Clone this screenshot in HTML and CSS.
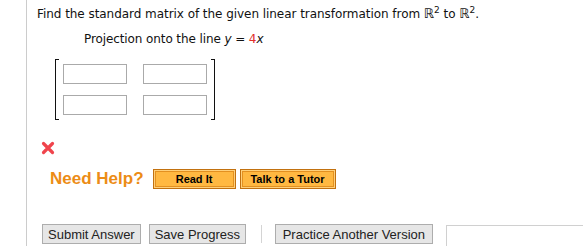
FILE: index.html
```html
<!DOCTYPE html>
<html>
<head>
<meta charset="utf-8">
<link rel="stylesheet" href="styles.css">
</head>
<body>
<div class="page">
  <div class="question">
    <p class="prompt">Find the standard matrix of the given linear transformation from <span class="bb">ℝ</span><sup>2</sup> to <span class="bb">ℝ</span><sup>2</sup>.</p>
    <p class="sub">Projection onto the line <i class="var">y</i> = <span class="rnd">4</span><i class="var">x</i></p>
    <div class="matrix">
      <div class="cells">
        <input class="cell" type="text">
        <input class="cell" type="text">
        <input class="cell" type="text">
        <input class="cell" type="text">
      </div>
    </div>
    <div class="mark">
      <svg width="14" height="14" viewBox="0 0 14 14"><path d="M2.5 2.5 L11.5 11.5 M11.5 2.5 L2.5 11.5" stroke="#f0444c" stroke-width="3.2" stroke-linecap="round"/></svg>
    </div>
    <div class="help">
      <span class="need">Need Help?</span>
      <button class="hbtn read">Read It</button>
      <button class="hbtn tutor">Talk to a Tutor</button>
    </div>
    <div class="actions">
      <button class="abtn">Submit Answer</button>
      <button class="abtn">Save Progress</button>
      <span class="sep"></span>
      <button class="abtn wide">Practice Another Version</button>
      <div class="box"></div>
    </div>
  </div>
</div>
</body>
</html>
```
FILE: styles.css
```css
html, body { margin: 0; padding: 0; background: #fff; }
.page {
  margin-left: 26px;
  border-left: 1px solid #cccccc;
  height: 246px;
  overflow: hidden;
}
.question {
  padding-left: 10px;
  font-family: "DejaVu Sans", Verdana, sans-serif;
  color: #111;
}
.prompt {
  margin: 0;
  padding-top: 4px;
  font-size: 12px;
  letter-spacing: -0.05px;
  line-height: 20px;
  white-space: nowrap;
}
.bb { font-size: 13px; }
sup { font-size: 9px; line-height: 0; vertical-align: 5px; }
.sub {
  margin: 0;
  padding-top: 5px;
  padding-left: 47px;
  font-size: 12px;
  letter-spacing: -0.1px;
  line-height: 20px;
}
.var { font-style: italic; }
.rnd { color: #e0302c; }
.matrix {
  margin-top: 10px;
  margin-left: 18px;
  width: 160px;
  height: 61px;
  position: relative;
  display: flex;
  align-items: center;
  justify-content: center;
}
.matrix::before, .matrix::after {
  content: "";
  position: absolute;
  top: 0;
  bottom: 0;
  width: 3px;
  border: 1.5px solid #111;
}
.matrix::before { left: 0; border-right: none; }
.matrix::after { right: 0; border-left: none; }
.cells {
  display: grid;
  grid-template-columns: 64px 64px;
  column-gap: 16px;
  row-gap: 11px;
}
.cell {
  box-sizing: border-box;
  width: 64px;
  height: 20px;
  margin: 0;
  padding: 0;
  border: 1px solid #aaaaaa;
  background: #fff;
}
.mark {
  margin-top: 21px;
  margin-left: 4px;
  height: 14px;
}
.mark svg { display: block; }
.help {
  display: flex;
  align-items: center;
  margin-top: 13px;
  margin-left: 13px;
  height: 22px;
}
.need {
  font-family: "Liberation Sans", Arial, sans-serif;
  font-weight: bold;
  font-size: 17px;
  color: #ec8c16;
  margin-right: 9px;
}
.hbtn {
  box-sizing: border-box;
  height: 20px;
  margin: 0 4px 0 0;
  padding: 0;
  font-family: "Liberation Sans", Arial, sans-serif;
  font-weight: bold;
  font-size: 11px;
  color: #000;
  background: #ffb841;
  border: 1px solid #c2710f;
  box-shadow: inset 0 0 0 1px #ffd07a, inset 0 0 0 2px #e39020;
}
.read { width: 83px; }
.tutor { width: 96px; }
.actions {
  display: flex;
  align-items: flex-end;
  margin-top: 34px;
  margin-left: 5px;
}
.abtn {
  box-sizing: border-box;
  height: 20px;
  margin: 0 8px 0 0;
  padding: 0 5px;
  white-space: nowrap;
  font-family: "Liberation Sans", Arial, sans-serif;
  font-size: 13px;
  color: #222;
  background: #e6e6e6;
  border: 1px solid #adadad;
  border-radius: 0;
}
.wide { padding: 0 7px; }
.sep {
  width: 1px;
  height: 18px;
  background: #d4d4d4;
  margin: 0 13px 1px 7px;
}
.box {
  margin-left: 5px;
  width: 200px;
  height: 30px;
  margin-bottom: -12px;
  border-top: 1px solid #d0d0d0;
  border-left: 1px solid #d0d0d0;
}
```
